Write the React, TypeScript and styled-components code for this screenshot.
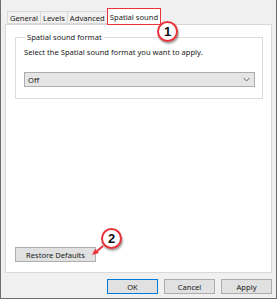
import React from "react";
import styled, { createGlobalStyle } from "styled-components";

const GlobalStyle = createGlobalStyle`
  html, body {
    margin: 0;
    padding: 0;
    background: #ffffff;
  }
  body {
    font-family: "Noto Sans", "Open Sans", sans-serif;
  }
`;

const Window = styled.div`
  position: relative;
  box-sizing: border-box;
  width: 277px;
  height: 299px;
  background: #f0f0f0;
  border-left: 1px solid #6d6d6d;
  border-right: 1px solid #6d6d6d;
  border-bottom: 1px solid #6d6d6d;
  padding: 8px 4px 0 4px;
  display: flex;
  flex-direction: column;
`;

const TabStrip = styled.div`
  display: flex;
  align-items: flex-end;
  height: 16px;
  padding-left: 2px;
  position: relative;
  z-index: 1;
`;

const Tab = styled.div<{ active?: boolean }>`
  box-sizing: border-box;
  height: ${(p) => (p.active ? "17px" : "13px")};
  margin-bottom: ${(p) => (p.active ? "-1px" : "0")};
  padding: 0 2px;
  display: flex;
  align-items: center;
  background: ${(p) => (p.active ? "#ffffff" : "#f0f0f0")};
  border: 1px solid #d9d9d9;
  border-bottom: ${(p) => (p.active ? "none" : "1px solid #d9d9d9")};
  margin-left: -1px;
  font-size: 7.6px;
  color: #1a1a1a;
  white-space: nowrap;
  ${(p) => (p.active ? "outline: 1.5px solid #e8343a; outline-offset: -1px;" : "")}
`;

const Panel = styled.div`
  box-sizing: border-box;
  height: 249px;
  background: #ffffff;
  border: 1px solid #d9d9d9;
  padding: 7px 8px 10px 9px;
  display: flex;
  flex-direction: column;
  justify-content: space-between;
`;

const Group = styled.fieldset`
  margin: 0;
  padding: 5px 7px 11px 8px;
  border: 1px solid #dcdcdc;
  min-width: 0;
`;

const Legend = styled.legend`
  padding: 0 2px;
  margin-left: 1px;
  font-size: 7.6px;
  color: #1a1a1a;
`;

const Hint = styled.div`
  font-size: 7.6px;
  color: #1a1a1a;
  margin-bottom: 15px;
`;

const Select = styled.div`
  box-sizing: border-box;
  height: 15px;
  background: #e5e5e5;
  border: 1px solid #adadad;
  display: flex;
  align-items: center;
  justify-content: space-between;
  padding: 0 4px 0 3px;
  font-size: 7.6px;
  color: #1a1a1a;
`;

const Button = styled.button<{ width: number; focused?: boolean }>`
  box-sizing: border-box;
  width: ${(p) => p.width}px;
  height: 15px;
  padding: 0;
  background: #e1e1e1;
  border: ${(p) => (p.focused ? "1.5px solid #0078d7" : "1px solid #adadad")};
  font-family: "Noto Sans", "Open Sans", sans-serif;
  font-size: 7.6px;
  color: #1a1a1a;
  display: flex;
  align-items: center;
  justify-content: center;
`;

const Footer = styled.div`
  display: flex;
  justify-content: flex-end;
  gap: 6px;
  padding: 6px 0 0 0;
`;

const Badge = styled.div<{ x: number; y: number }>`
  position: absolute;
  left: ${(p) => p.x}px;
  top: ${(p) => p.y}px;
  box-sizing: border-box;
  width: 21px;
  height: 21px;
  border-radius: 50%;
  background: #ffffff;
  border: 2px solid #e8343a;
  box-shadow: 1px 2px 2px rgba(0, 0, 0, 0.35);
  display: flex;
  align-items: center;
  justify-content: center;
  font-family: "Liberation Sans", Arial, sans-serif;
  font-weight: bold;
  font-size: 13px;
  color: #111;
  z-index: 3;
`;

const Arrow = styled.svg`
  position: absolute;
  left: 88px;
  top: 240px;
  z-index: 2;
`;

const Chevron = () => (
  <svg width="7" height="5" viewBox="0 0 7 5">
    <path d="M0.5 1 L3.5 4 L6.5 1" fill="none" stroke="#666" strokeWidth="1" />
  </svg>
);

const App = () => {
  return (
    <>
      <GlobalStyle />
      <Window>
        <TabStrip>
          <Tab style={{ marginLeft: 0 }}>General</Tab>
          <Tab>Levels</Tab>
          <Tab>Advanced</Tab>
          <Tab active>Spatial sound</Tab>
        </TabStrip>
        <Panel>
          <Group>
            <Legend>Spatial sound format</Legend>
            <Hint>Select the Spatial sound format you want to apply.</Hint>
            <Select>
              <span>Off</span>
              <Chevron />
            </Select>
          </Group>
          <Button width={81}>Restore Defaults</Button>
        </Panel>
        <Footer>
          <Button width={51} focused>
            OK
          </Button>
          <Button width={51}>Cancel</Button>
          <Button width={51}>Apply</Button>
        </Footer>
        <Badge x={156} y={21}>1</Badge>
        <Badge x={100} y={228}>2</Badge>
        <Arrow width="20" height="20" viewBox="0 0 20 20">
          <line x1="14" y1="6" x2="7" y2="12" stroke="#e8343a" strokeWidth="2" />
          <polygon points="3,15 6,9 10,13" fill="#e8343a" />
        </Arrow>
      </Window>
    </>
  );
};

export default App;
